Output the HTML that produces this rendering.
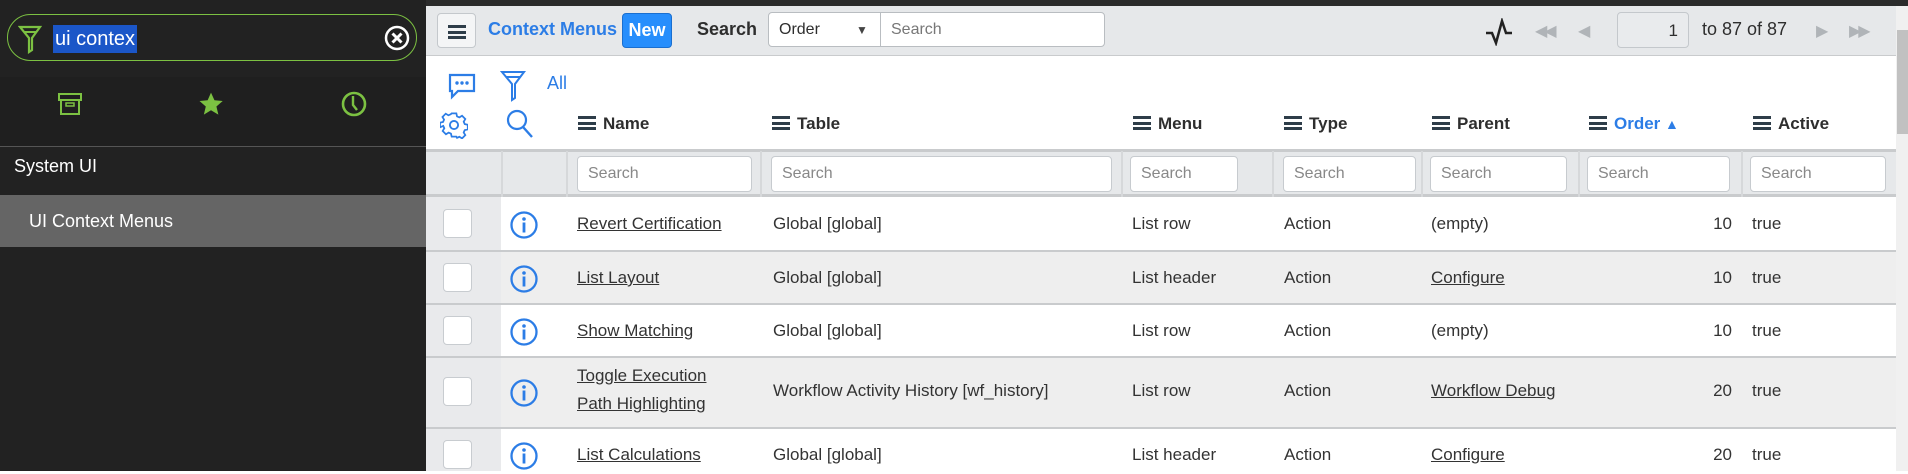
<!DOCTYPE html>
<html><head><meta charset="utf-8"><style>
*{box-sizing:border-box;margin:0;padding:0}
body{width:1908px;height:471px;overflow:hidden;position:relative;font-family:"Liberation Sans",sans-serif;font-size:17px;color:#2e2e2e;background:#fff}
.a{position:absolute}
.sb{left:0;top:0;width:426px;height:471px;background:#222}
.ham{display:inline-block;width:18px;height:14px;border-top:3px solid #2e3d49;border-bottom:3px solid #2e3d49;position:relative;vertical-align:-1px;margin-right:7px}
.ham:after{content:"";position:absolute;left:0;right:0;top:2.5px;border-top:3px solid #2e3d49}
.th{top:114px;font-weight:bold;font-size:17px;color:#2e2e2e}
.inp{border:1px solid #c7cbcf;border-radius:4px;background:#fff;height:36px;top:156px;color:#888;font-size:16px;padding:8px 0 0 10px}
.row{left:426px;width:1470px;border-bottom:2px solid #c9cbcd}
.cb{left:443px;width:29px;height:29px;background:#fff;border:1px solid #c8ccd0;border-radius:4px}
.t{font-size:17px;color:#333}
.u{text-decoration:underline}
.sep{top:151px;height:46px;width:2px;background:#d6d8da}
</style></head><body>
<div class="a" style="left:0;top:0;width:1908px;height:6px;background:#2b2b2b"></div>
<div class="a sb"></div>
<div class="a" style="left:7px;top:14px;width:410px;height:47px;border:1.5px solid #7cc142;border-radius:24px"></div>
<svg class="a" style="left:18px;top:24px" width="24" height="30" viewBox="0 0 24 30"><path d="M2 3h20L14 14v12l-3 2V14z" fill="none" stroke="#7cc142" stroke-width="2.2"/><path d="M6 8h12" stroke="#7cc142" stroke-width="2"/></svg>
<div class="a" style="left:53px;top:25px;height:28px;background:#1b56c8;color:#fff;font-size:20px;padding:1px 2px;line-height:26px">ui contex</div>
<svg class="a" style="left:383px;top:24px" width="28" height="28" viewBox="0 0 28 28"><circle cx="14" cy="14" r="11" fill="none" stroke="#fff" stroke-width="2.5"/><path d="M9.5 9.5l9 9M18.5 9.5l-9 9" stroke="#fff" stroke-width="3"/></svg>
<div class="a" style="left:0;top:77px;width:426px;height:69px;background:#1f1f1f"></div>
<svg class="a" style="left:57px;top:91px" width="26" height="26" viewBox="0 0 26 26"><rect x="2" y="3" width="22" height="6" fill="none" stroke="#7cc142" stroke-width="2"/><rect x="4" y="9" width="18" height="14" fill="none" stroke="#7cc142" stroke-width="2"/><rect x="9" y="12" width="8" height="3" fill="none" stroke="#7cc142" stroke-width="1.5"/></svg>
<svg class="a" style="left:198px;top:91px" width="26" height="26" viewBox="0 0 24 24"><path d="M12 1.5l3.2 7 7.6.7-5.8 5.1 1.8 7.5L12 17.8l-6.6 4 1.8-7.5L1.4 9.2l7.5-.7z" fill="#7cc142"/></svg>
<svg class="a" style="left:340px;top:89px" width="28" height="30" viewBox="0 0 28 30"><circle cx="14" cy="15" r="11" fill="none" stroke="#7cc142" stroke-width="2.6"/><path d="M13 7v9l4 5" fill="none" stroke="#7cc142" stroke-width="2.4"/></svg>
<div class="a" style="left:0;top:146px;width:426px;height:1px;background:#555"></div>
<div class="a" style="left:14px;top:156px;color:#fff;font-size:18px">System UI</div>
<div class="a" style="left:0;top:195px;width:426px;height:52px;background:#656565"></div>
<div class="a" style="left:29px;top:211px;color:#fff;font-size:18px">UI Context Menus</div>

<!-- header -->
<div class="a" style="left:426px;top:6px;width:1470px;height:50px;background:#e6e8ea;border-bottom:1px solid #c9cbcd"></div>
<div class="a" style="left:437px;top:13px;width:39px;height:35px;border:1px solid #c4c8cc;border-radius:4px;background:#f4f5f6;padding:9px 0 0 10px"><span class="ham" style="margin:0"></span></div>
<div class="a" style="left:488px;top:19px;color:#2c7de6;font-weight:bold;font-size:18px">Context Menus</div>
<div class="a" style="left:622px;top:13px;width:50px;height:35px;background:#278efc;border-radius:4px;color:#fff;font-weight:bold;font-size:18px;text-align:center;line-height:33px;border:1px solid #1a6fd0">New</div>
<div class="a" style="left:697px;top:19px;font-weight:bold;font-size:18px">Search</div>
<div class="a" style="left:768px;top:12px;width:113px;height:35px;background:#fff;border:1px solid #b9bdc1;border-radius:4px 0 0 4px;padding:8px 0 0 10px;font-size:16px">Order<span style="position:absolute;left:87px;top:10px;font-size:12px;color:#444">▼</span></div>
<div class="a" style="left:880px;top:12px;width:225px;height:35px;background:#fff;border:1px solid #b9bdc1;border-radius:0 4px 4px 0;padding:8px 0 0 10px;font-size:16px;color:#777">Search</div>
<svg class="a" style="left:1484px;top:18px" width="30" height="28" viewBox="0 0 30 28"><path d="M2 15h6l4 10 6-22 4 12h6" fill="none" stroke="#222" stroke-width="2.5"/></svg>
<div class="a" style="left:1535px;top:21px;color:#b0b4b8;font-size:16px;letter-spacing:-3px">◀◀</div>
<div class="a" style="left:1578px;top:21px;color:#b0b4b8;font-size:16px">◀</div>
<div class="a" style="left:1617px;top:12px;width:72px;height:36px;border:1px solid #c4c8cc;border-radius:4px;background:#e9ebed;text-align:right;padding:8px 10px 0 0;font-size:17px">1</div>
<div class="a" style="left:1702px;top:19px;font-size:18px">to 87 of 87</div>
<div class="a" style="left:1816px;top:21px;color:#b0b4b8;font-size:16px">▶</div>
<div class="a" style="left:1849px;top:21px;color:#b0b4b8;font-size:16px;letter-spacing:-3px">▶▶</div>
<div class="a" style="left:1896px;top:6px;width:12px;height:465px;background:#f0f0f0"></div>
<div class="a" style="left:1897px;top:30px;width:11px;height:104px;background:#c1c1c1"></div>

<!-- toolbar icons -->
<svg class="a" style="left:447px;top:71px" width="30" height="30" viewBox="0 0 30 30"><path d="M3 4h24v16H11l-6 6v-6H3z" fill="none" stroke="#2c7de6" stroke-width="2.2"/><circle cx="10" cy="12" r="1.7" fill="#2c7de6"/><circle cx="15" cy="12" r="1.7" fill="#2c7de6"/><circle cx="20" cy="12" r="1.7" fill="#2c7de6"/></svg>
<svg class="a" style="left:500px;top:70px" width="26" height="32" viewBox="0 0 26 32"><path d="M2 2h22L15 14v14l-3 2V14z" fill="none" stroke="#2c7de6" stroke-width="2"/><path d="M6 7h14" stroke="#2c7de6" stroke-width="2"/></svg>
<div class="a" style="left:547px;top:73px;color:#2c7de6;font-size:18px">All</div>
<svg class="a" style="left:440px;top:111px" width="28" height="28" viewBox="0 0 24 24"><path d="M10 2h4l.6 2.6 2 .9 2.3-1.4 2.8 2.8-1.4 2.3.9 2 2.6.6v4l-2.6.6-.9 2 1.4 2.3-2.8 2.8-2.3-1.4-2 .9L14 22h-4l-.6-2.6-2-.9-2.3 1.4-2.8-2.8 1.4-2.3-.9-2L0 14v-4l2.6-.6.9-2L2.1 5.1 4.9 2.3l2.3 1.4 2-.9z" fill="none" stroke="#2c7de6" stroke-width="1.5"/><circle cx="12" cy="12" r="3.5" fill="none" stroke="#2c7de6" stroke-width="1.6"/></svg>
<svg class="a" style="left:505px;top:108px" width="30" height="32" viewBox="0 0 30 32"><circle cx="12" cy="12" r="9" fill="none" stroke="#2c7de6" stroke-width="2.2"/><path d="M18 19l9 10" stroke="#2c7de6" stroke-width="2.4"/></svg>

<!-- headers -->
<div class="a th" style="left:578px"><span class="ham"></span>Name</div>
<div class="a th" style="left:772px"><span class="ham"></span>Table</div>
<div class="a th" style="left:1133px"><span class="ham"></span>Menu</div>
<div class="a th" style="left:1284px"><span class="ham"></span>Type</div>
<div class="a th" style="left:1432px"><span class="ham"></span>Parent</div>
<div class="a th" style="left:1589px;color:#2c7de6"><span class="ham"></span>Order <span style="font-size:14px">▲</span></div>
<div class="a th" style="left:1753px"><span class="ham"></span>Active</div>

<!-- filter row -->
<div class="a" style="left:426px;top:149px;width:1470px;height:48px;background:#e6e8ea;border-top:3px solid #c9cbcd;border-bottom:3px solid #c9cbcd"></div>
<div class="a sep" style="left:501px"></div><div class="a sep" style="left:566px"></div><div class="a sep" style="left:760px"></div><div class="a sep" style="left:1121px"></div><div class="a sep" style="left:1272px"></div><div class="a sep" style="left:1421px"></div><div class="a sep" style="left:1578px"></div><div class="a sep" style="left:1741px"></div>
<div class="a inp" style="left:577px;width:175px">Search</div>
<div class="a inp" style="left:771px;width:341px">Search</div>
<div class="a inp" style="left:1130px;width:108px">Search</div>
<div class="a inp" style="left:1283px;width:133px">Search</div>
<div class="a inp" style="left:1430px;width:137px">Search</div>
<div class="a inp" style="left:1587px;width:143px">Search</div>
<div class="a inp" style="left:1750px;width:136px">Search</div>

<!-- rows -->
<div class="a row" style="top:197px;height:55px;background:#fff"></div>
<div class="a row" style="top:252px;height:53px;background:#eeeeee"></div>
<div class="a row" style="top:305px;height:53px;background:#fff"></div>
<div class="a row" style="top:358px;height:71px;background:#eeeeee"></div>
<div class="a row" style="top:429px;height:45px;background:#fff;border:0"></div>
<div class="a" style="left:426px;top:197px;width:75px;height:274px;background:#e9eaec"></div>
<div class="a" style="left:426px;top:250px;width:1470px;height:2px;background:#c9cbcd"></div>
<div class="a" style="left:426px;top:303px;width:1470px;height:2px;background:#c9cbcd"></div>
<div class="a" style="left:426px;top:356px;width:1470px;height:2px;background:#c9cbcd"></div>
<div class="a" style="left:426px;top:427px;width:1470px;height:2px;background:#c9cbcd"></div>

<div class="a cb" style="top:209px"></div><div class="a cb" style="top:263px"></div><div class="a cb" style="top:316px"></div><div class="a cb" style="top:377px"></div><div class="a cb" style="top:440px"></div>

<svg width="0" height="0" style="position:absolute"><defs><symbol id="i" viewBox="0 0 30 30"><circle cx="15" cy="15" r="12.5" fill="none" stroke="#2c7de6" stroke-width="2.3"/><circle cx="15" cy="9" r="1.8" fill="#2c7de6"/><rect x="13.6" y="12.5" width="2.8" height="10" fill="#2c7de6"/></symbol></defs></svg>
<svg class="a" style="left:509px;top:210px" width="30" height="30"><use href="#i"/></svg>
<svg class="a" style="left:509px;top:264px" width="30" height="30"><use href="#i"/></svg>
<svg class="a" style="left:509px;top:317px" width="30" height="30"><use href="#i"/></svg>
<svg class="a" style="left:509px;top:378px" width="30" height="30"><use href="#i"/></svg>
<svg class="a" style="left:509px;top:441px" width="30" height="30"><use href="#i"/></svg>

<div class="a t u" style="left:577px;top:214px">Revert Certification</div>
<div class="a t u" style="left:577px;top:268px">List Layout</div>
<div class="a t u" style="left:577px;top:321px">Show Matching</div>
<div class="a t u" style="left:577px;top:366px">Toggle Execution</div>
<div class="a t u" style="left:577px;top:394px">Path Highlighting</div>
<div class="a t u" style="left:577px;top:445px">List Calculations</div>

<div class="a t" style="left:773px;top:214px">Global [global]</div>
<div class="a t" style="left:773px;top:268px">Global [global]</div>
<div class="a t" style="left:773px;top:321px">Global [global]</div>
<div class="a t" style="left:773px;top:381px">Workflow Activity History [wf_history]</div>
<div class="a t" style="left:773px;top:445px">Global [global]</div>

<div class="a t" style="left:1132px;top:214px">List row</div>
<div class="a t" style="left:1132px;top:268px">List header</div>
<div class="a t" style="left:1132px;top:321px">List row</div>
<div class="a t" style="left:1132px;top:381px">List row</div>
<div class="a t" style="left:1132px;top:445px">List header</div>

<div class="a t" style="left:1284px;top:214px">Action</div>
<div class="a t" style="left:1284px;top:268px">Action</div>
<div class="a t" style="left:1284px;top:321px">Action</div>
<div class="a t" style="left:1284px;top:381px">Action</div>
<div class="a t" style="left:1284px;top:445px">Action</div>

<div class="a t" style="left:1431px;top:214px">(empty)</div>
<div class="a t u" style="left:1431px;top:268px">Configure</div>
<div class="a t" style="left:1431px;top:321px">(empty)</div>
<div class="a t u" style="left:1431px;top:381px">Workflow Debug</div>
<div class="a t u" style="left:1431px;top:445px">Configure</div>

<div class="a t" style="left:1700px;width:32px;text-align:right;top:214px">10</div>
<div class="a t" style="left:1700px;width:32px;text-align:right;top:268px">10</div>
<div class="a t" style="left:1700px;width:32px;text-align:right;top:321px">10</div>
<div class="a t" style="left:1700px;width:32px;text-align:right;top:381px">20</div>
<div class="a t" style="left:1700px;width:32px;text-align:right;top:445px">20</div>

<div class="a t" style="left:1752px;top:214px">true</div>
<div class="a t" style="left:1752px;top:268px">true</div>
<div class="a t" style="left:1752px;top:321px">true</div>
<div class="a t" style="left:1752px;top:381px">true</div>
<div class="a t" style="left:1752px;top:445px">true</div>
</body></html>
